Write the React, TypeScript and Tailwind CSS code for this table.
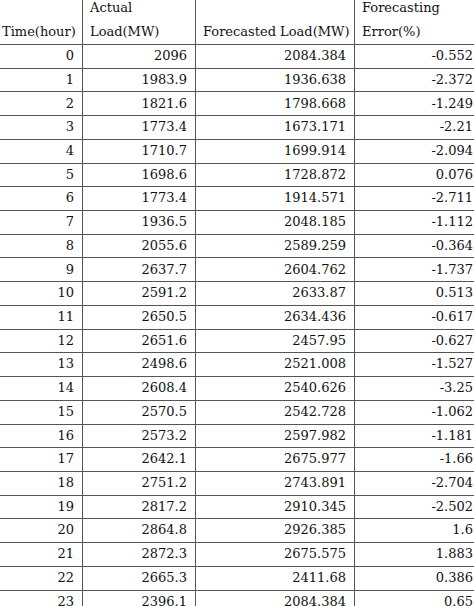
import React from "react";

const rows: [string, string, string, string][] = [
  ["0", "2096", "2084.384", "-0.552"],
  ["1", "1983.9", "1936.638", "-2.372"],
  ["2", "1821.6", "1798.668", "-1.249"],
  ["3", "1773.4", "1673.171", "-2.21"],
  ["4", "1710.7", "1699.914", "-2.094"],
  ["5", "1698.6", "1728.872", "0.076"],
  ["6", "1773.4", "1914.571", "-2.711"],
  ["7", "1936.5", "2048.185", "-1.112"],
  ["8", "2055.6", "2589.259", "-0.364"],
  ["9", "2637.7", "2604.762", "-1.737"],
  ["10", "2591.2", "2633.87", "0.513"],
  ["11", "2650.5", "2634.436", "-0.617"],
  ["12", "2651.6", "2457.95", "-0.627"],
  ["13", "2498.6", "2521.008", "-1.527"],
  ["14", "2608.4", "2540.626", "-3.25"],
  ["15", "2570.5", "2542.728", "-1.062"],
  ["16", "2573.2", "2597.982", "-1.181"],
  ["17", "2642.1", "2675.977", "-1.66"],
  ["18", "2751.2", "2743.891", "-2.704"],
  ["19", "2817.2", "2910.345", "-2.502"],
  ["20", "2864.8", "2926.385", "1.6"],
  ["21", "2872.3", "2675.575", "1.883"],
  ["22", "2665.3", "2411.68", "0.386"],
  ["23", "2396.1", "2084.384", "0.65"],
];

const grid = "grid grid-cols-[83px_113px_159px_127px]";
const line = "border-[#555]";

const HeadCell = ({ top, bottom, first }: { top?: string; bottom: string; first?: boolean }) => (
  <div
    className={`flex flex-col justify-end h-[44px] leading-[24px] whitespace-nowrap border-r-[1.5px] ${line} ${
      first ? "pl-[2px]" : "pl-[7px]"
    }`}
  >
    {top && <span>{top}</span>}
    <span>{bottom}</span>
  </div>
);

export default function App() {
  return (
    <div className="w-[474px] h-[606px] overflow-hidden bg-white">
      <div
        className="w-[482px] text-[13px] text-[#111]"
        style={{ fontFamily: '"DejaVu Serif", serif' }}
      >
        <div className={`${grid} border-b-[1.5px] ${line}`}>
          <HeadCell first bottom="Time(hour)" />
          <HeadCell top="Actual" bottom="Load(MW)" />
          <HeadCell bottom="Forecasted Load(MW)" />
          <HeadCell top="Forecasting" bottom="Error(%)" />
        </div>
        {rows.map((r) => (
          <div key={r[0]} className={`${grid} h-[23.73px] border-b-[1.5px] ${line}`}>
            {r.map((v, i) => (
              <div
                key={i}
                className={`flex items-center justify-end pr-[8px] pb-[1px] whitespace-nowrap border-r-[1.5px] ${line}`}
              >
                {v}
              </div>
            ))}
          </div>
        ))}
      </div>
    </div>
  );
}
